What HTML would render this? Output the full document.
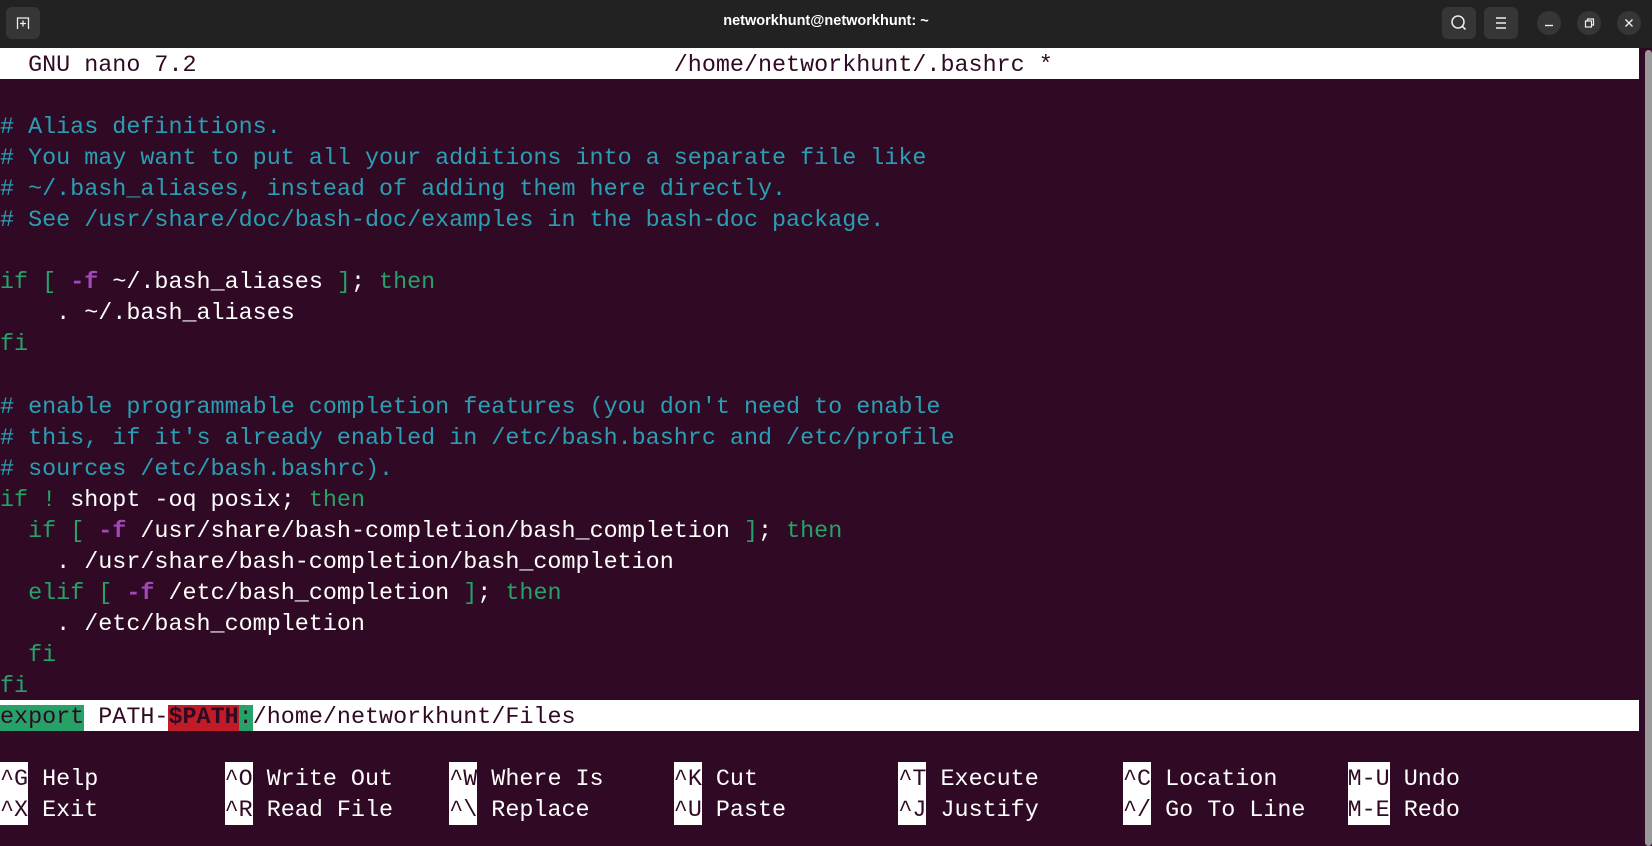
<!DOCTYPE html>
<html><head><meta charset="utf-8"><style>
html,body{margin:0;padding:0;width:1652px;height:846px;overflow:hidden;background:#300a24}
#tb{position:absolute;left:0;top:0;width:1652px;height:48px;background:#222222;}
#title{position:absolute;left:0;width:1652px;top:13px;text-align:center;color:#fff;font:bold 14.5px "Liberation Sans",sans-serif}
.btn{position:absolute;top:7px;width:34px;height:32px;border-radius:6px;background:#363636}
.circ{position:absolute;top:11px;width:24px;height:24px;border-radius:50%;background:#363636}
#term{position:absolute;left:0;top:48px;font-family:"Liberation Mono",monospace;font-size:23.4px;color:#ffffff}
.r{height:31.05px;line-height:36px;white-space:pre;width:1639px}
.c{color:#2a9fb4}.g{color:#26a269}.p{color:#a347ba;font-weight:bold}
.w{background:#fff;color:#300a24}
.k{background:#fff;color:#300a24;display:inline-block;height:32px;vertical-align:top}
#sb{position:absolute;left:1645px;top:50px;width:7px;height:796px;border-radius:4px;background:#9a9a9a}
</style></head><body>
<div id="tb">
 <div class="btn" style="left:6px"><svg width="34" height="32"><path d="M11.5 22 V11 H22.5 V22" fill="none" stroke="#eee" stroke-width="1.3"/><path d="M17 13.5 V19.5 M14 16.5 H20" stroke="#eee" stroke-width="1.3"/></svg></div>
 <div id="title">networkhunt@networkhunt: ~</div>
 <div class="btn" style="left:1442px"><svg width="34" height="32"><circle cx="16" cy="15" r="6" fill="none" stroke="#eee" stroke-width="1.5"/><path d="M20.3 19.3 L23.5 22.5" stroke="#eee" stroke-width="1.6"/></svg></div>
 <div class="btn" style="left:1484px"><svg width="34" height="32"><path d="M12 11H22M12 16H22M12 21H22" stroke="#eee" stroke-width="1.4"/></svg></div>
 <div class="circ" style="left:1537px"><svg width="24" height="24"><path d="M8 14.5H16" stroke="#eee" stroke-width="1.4"/></svg></div>
 <div class="circ" style="left:1577px"><svg width="24" height="24"><rect x="8.5" y="10" width="6" height="6" fill="none" stroke="#eee" stroke-width="1.2"/><path d="M10.5 10V8H16.5V14H14.5" fill="none" stroke="#eee" stroke-width="1.2"/></svg></div>
 <div class="circ" style="left:1617px"><svg width="24" height="24"><path d="M8.5 8.5L15.5 15.5M15.5 8.5L8.5 15.5" stroke="#eee" stroke-width="1.4"/></svg></div>
</div>
<div id="term">
<div class="r w">  GNU nano 7.2                                  /home/networkhunt/.bashrc *</div>
<div class="r"> </div>
<div class="r c"># Alias definitions.</div>
<div class="r c"># You may want to put all your additions into a separate file like</div>
<div class="r c"># ~/.bash_aliases, instead of adding them here directly.</div>
<div class="r c"># See /usr/share/doc/bash-doc/examples in the bash-doc package.</div>
<div class="r"> </div>
<div class="r"><span class="g">if [</span> <span class="p">-f</span> ~/.bash_aliases <span class="g">]</span>; <span class="g">then</span></div>
<div class="r">    . ~/.bash_aliases</div>
<div class="r g">fi</div>
<div class="r"> </div>
<div class="r c"># enable programmable completion features (you don't need to enable</div>
<div class="r c"># this, if it's already enabled in /etc/bash.bashrc and /etc/profile</div>
<div class="r c"># sources /etc/bash.bashrc).</div>
<div class="r"><span class="g">if !</span> shopt -oq posix; <span class="g">then</span></div>
<div class="r">  <span class="g">if [</span> <span class="p">-f</span> /usr/share/bash-completion/bash_completion <span class="g">]</span>; <span class="g">then</span></div>
<div class="r">    . /usr/share/bash-completion/bash_completion</div>
<div class="r">  <span class="g">elif [</span> <span class="p">-f</span> /etc/bash_completion <span class="g">]</span>; <span class="g">then</span></div>
<div class="r">    . /etc/bash_completion</div>
<div class="r g">  fi</div>
<div class="r g">fi</div>
<div class="r w"><span style="background:#26a269">export</span> PATH-<span style="background:#c01c28;font-weight:bold">$PATH</span><span style="background:#26a269">:</span>/home/networkhunt/Files</div>
<div class="r"> </div>
<div class="r"><span class="k">^G</span> Help         <span class="k">^O</span> Write Out    <span class="k">^W</span> Where Is     <span class="k">^K</span> Cut          <span class="k">^T</span> Execute      <span class="k">^C</span> Location     <span class="k">M-U</span> Undo</div>
<div class="r"><span class="k">^X</span> Exit         <span class="k">^R</span> Read File    <span class="k">^\</span> Replace      <span class="k">^U</span> Paste        <span class="k">^J</span> Justify      <span class="k">^/</span> Go To Line   <span class="k">M-E</span> Redo</div>
</div>
<div id="sb"></div>
</body></html>
